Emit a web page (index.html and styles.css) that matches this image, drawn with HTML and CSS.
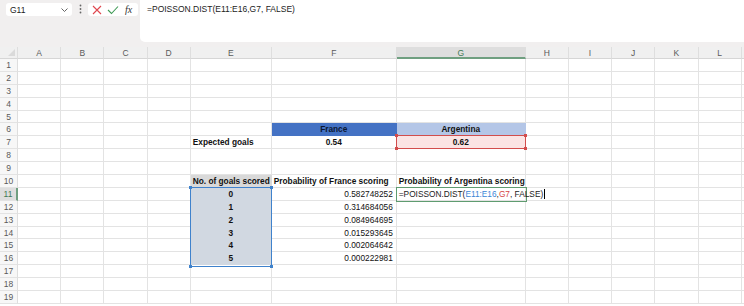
FILE: index.html
```html
<!DOCTYPE html>
<html lang="en">
<head>
    <meta charset="UTF-8" />
    <title>Poisson - expected goals</title>
    <link rel="stylesheet" href="styles.css">
</head>
<body>
    <div class="topbar">
        <div class="namebox">
            <span>G11</span>
            <svg width="7" height="4" viewBox="0 0 7 4"><path d="M0.5 0.5 L3.5 3.5 L6.5 0.5" fill="none" stroke="#555" stroke-width="0.9"/></svg>
        </div>
        <svg class="more" width="3" height="10" viewBox="0 0 3 10">
            <circle cx="1.5" cy="1.5" r="0.9" fill="#666"/>
            <circle cx="1.5" cy="5" r="0.9" fill="#666"/>
            <circle cx="1.5" cy="8.5" r="0.9" fill="#666"/>
        </svg>
        <div class="fbtns">
            <svg width="10" height="10" viewBox="0 0 10 10"><path d="M1 1 L9 9 M9 1 L1 9" stroke="#e0474f" stroke-width="1.1"/></svg>
            <svg width="12" height="10" viewBox="0 0 12 10"><path d="M1 5 L4.5 8.5 L11 1.5" fill="none" stroke="#3f9a55" stroke-width="1.1"/></svg>
            <span class="fx">fx</span>
        </div>
        <div class="formula">=POISSON.DIST(E11:E16,G7, FALSE)</div>
    </div>

    <div class="sheet">
        <!-- column headers -->
        <div class="ch corner"></div>
        <div class="ch">A</div><div class="ch">B</div><div class="ch">C</div><div class="ch">D</div>
        <div class="ch">E</div><div class="ch">F</div><div class="ch on">G</div><div class="ch">H</div>
        <div class="ch">I</div><div class="ch">J</div><div class="ch">K</div><div class="ch">L</div><div class="ch"></div>

        <div class="rh">1</div><div class="c"></div><div class="c"></div><div class="c"></div><div class="c"></div><div class="c"></div><div class="c"></div><div class="c"></div><div class="c"></div><div class="c"></div><div class="c"></div><div class="c"></div><div class="c"></div><div class="c"></div>
        <div class="rh">2</div><div class="c"></div><div class="c"></div><div class="c"></div><div class="c"></div><div class="c"></div><div class="c"></div><div class="c"></div><div class="c"></div><div class="c"></div><div class="c"></div><div class="c"></div><div class="c"></div><div class="c"></div>
        <div class="rh">3</div><div class="c"></div><div class="c"></div><div class="c"></div><div class="c"></div><div class="c"></div><div class="c"></div><div class="c"></div><div class="c"></div><div class="c"></div><div class="c"></div><div class="c"></div><div class="c"></div><div class="c"></div>
        <div class="rh">4</div><div class="c"></div><div class="c"></div><div class="c"></div><div class="c"></div><div class="c"></div><div class="c"></div><div class="c"></div><div class="c"></div><div class="c"></div><div class="c"></div><div class="c"></div><div class="c"></div><div class="c"></div>
        <div class="rh">5</div><div class="c"></div><div class="c"></div><div class="c"></div><div class="c"></div><div class="c"></div><div class="c"></div><div class="c"></div><div class="c"></div><div class="c"></div><div class="c"></div><div class="c"></div><div class="c"></div><div class="c"></div>

        <div class="rh">6</div><div class="c"></div><div class="c"></div><div class="c"></div><div class="c"></div><div class="c"></div>
        <div class="c b ctr fill-blue">France</div>
        <div class="c b ctr fill-light">Argentina</div>
        <div class="c"></div><div class="c"></div><div class="c"></div><div class="c"></div><div class="c"></div><div class="c"></div>

        <div class="rh">7</div><div class="c"></div><div class="c"></div><div class="c"></div><div class="c"></div>
        <div class="c b">Expected goals</div>
        <div class="c b ctr">0.54</div>
        <div class="c b ctr fill-pink ref">0.62
            <div class="hl red"><i class="h tl"></i><i class="h tr"></i><i class="h bl"></i><i class="h br"></i></div>
        </div>
        <div class="c"></div><div class="c"></div><div class="c"></div><div class="c"></div><div class="c"></div><div class="c"></div>

        <div class="rh">8</div><div class="c"></div><div class="c"></div><div class="c"></div><div class="c"></div><div class="c"></div><div class="c"></div><div class="c"></div><div class="c"></div><div class="c"></div><div class="c"></div><div class="c"></div><div class="c"></div><div class="c"></div>
        <div class="rh">9</div><div class="c"></div><div class="c"></div><div class="c"></div><div class="c"></div><div class="c"></div><div class="c"></div><div class="c"></div><div class="c"></div><div class="c"></div><div class="c"></div><div class="c"></div><div class="c"></div><div class="c"></div>

        <div class="rh">10</div><div class="c"></div><div class="c"></div><div class="c"></div><div class="c"></div>
        <div class="c b fill-grey">No. of goals scored</div>
        <div class="c b">Probability of France scoring</div>
        <div class="c b">Probability of Argentina scoring</div>
        <div class="c"></div><div class="c"></div><div class="c"></div><div class="c"></div><div class="c"></div><div class="c"></div>

        <div class="rh on">11</div><div class="c"></div><div class="c"></div><div class="c"></div><div class="c"></div>
        <div class="c b ctr fill-sel ref">0
            <div class="hl blue tall"><i class="h tl"></i><i class="h tr"></i><i class="h bl"></i><i class="h br"></i></div>
        </div>
        <div class="c r">0.582748252</div>
        <div class="c edit">=POISSON.DIST(<span class="t-blue">E11:E16</span>,<span class="t-red">G7</span>, FALSE)<span class="caret"></span></div>
        <div class="c"></div><div class="c"></div><div class="c"></div><div class="c"></div><div class="c"></div><div class="c"></div>

        <div class="rh">12</div><div class="c"></div><div class="c"></div><div class="c"></div><div class="c"></div>
        <div class="c b ctr fill-sel">1</div><div class="c r">0.314684056</div>
        <div class="c"></div><div class="c"></div><div class="c"></div><div class="c"></div><div class="c"></div><div class="c"></div><div class="c"></div>

        <div class="rh">13</div><div class="c"></div><div class="c"></div><div class="c"></div><div class="c"></div>
        <div class="c b ctr fill-sel">2</div><div class="c r">0.084964695</div>
        <div class="c"></div><div class="c"></div><div class="c"></div><div class="c"></div><div class="c"></div><div class="c"></div><div class="c"></div>

        <div class="rh">14</div><div class="c"></div><div class="c"></div><div class="c"></div><div class="c"></div>
        <div class="c b ctr fill-sel">3</div><div class="c r">0.015293645</div>
        <div class="c"></div><div class="c"></div><div class="c"></div><div class="c"></div><div class="c"></div><div class="c"></div><div class="c"></div>

        <div class="rh">15</div><div class="c"></div><div class="c"></div><div class="c"></div><div class="c"></div>
        <div class="c b ctr fill-sel">4</div><div class="c r">0.002064642</div>
        <div class="c"></div><div class="c"></div><div class="c"></div><div class="c"></div><div class="c"></div><div class="c"></div><div class="c"></div>

        <div class="rh">16</div><div class="c"></div><div class="c"></div><div class="c"></div><div class="c"></div>
        <div class="c b ctr fill-sel">5</div><div class="c r">0.000222981</div>
        <div class="c"></div><div class="c"></div><div class="c"></div><div class="c"></div><div class="c"></div><div class="c"></div><div class="c"></div>

        <div class="rh">17</div><div class="c"></div><div class="c"></div><div class="c"></div><div class="c"></div><div class="c"></div><div class="c"></div><div class="c"></div><div class="c"></div><div class="c"></div><div class="c"></div><div class="c"></div><div class="c"></div><div class="c"></div>
        <div class="rh">18</div><div class="c"></div><div class="c"></div><div class="c"></div><div class="c"></div><div class="c"></div><div class="c"></div><div class="c"></div><div class="c"></div><div class="c"></div><div class="c"></div><div class="c"></div><div class="c"></div><div class="c"></div>
        <div class="rh">19</div><div class="c"></div><div class="c"></div><div class="c"></div><div class="c"></div><div class="c"></div><div class="c"></div><div class="c"></div><div class="c"></div><div class="c"></div><div class="c"></div><div class="c"></div><div class="c"></div><div class="c"></div>
    </div>
</body>
</html>
```

FILE: styles.css
```css
/* excel-ish sheet, zoomed out */
:root {
    --row: 12.9px;
    --grid: #e3e3e3;
}
body {
    margin: 0;
    width: 744px;
    height: 306px;
    overflow: hidden;
    background: #fff;
    color: #111;
    font-family: 'Liberation Sans', Arial, sans-serif;
}

/* formula bar */
.topbar {
    display: flex;
    align-items: flex-start;
    height: 47px;
    background: #f1efef;
}
.namebox {
    margin: 3px 0 0 6px;
    width: 66px;
    height: 13px;
    padding: 0 4px 0 4px;
    box-sizing: border-box;
    background: #fff;
    border-radius: 3px;
    display: flex;
    align-items: center;
    justify-content: space-between;
    font-size: 8.5px;
    color: #222;
}
.more {
    margin: 4px 0 0 7px;
}
.fbtns {
    margin: 3px 0 0 6px;
    width: 50px;
    height: 13px;
    padding-left: 4px;
    box-sizing: border-box;
    background: #fff;
    border-radius: 3px;
    display: flex;
    align-items: center;
    gap: 5px;
}
.fx {
    font-family: 'Liberation Serif', serif;
    font-style: italic;
    font-size: 10px;
    color: #333;
    margin-left: 1px;
}
.formula {
    margin-left: 2px;
    flex: 1;
    height: 42px;
    padding: 3px 7px;
    box-sizing: border-box;
    background: #fff;
    border-radius: 0 0 0 5px;
    font-size: 8.5px;
    line-height: 12px;
    color: #222;
}

/* grid */
.sheet {
    display: grid;
    grid-template-columns: 18px repeat(4, 43.2px) 81px 125px 129px repeat(5, 43.2px) 1fr;
    grid-template-rows: 12px repeat(19, var(--row));
    font-size: 8.3px;
}
.sheet > div {
    box-sizing: border-box;
    border-right: 1px solid var(--grid);
    border-bottom: 1px solid var(--grid);
    white-space: nowrap;
    line-height: 12px;
}
.ch {
    background: #f0f0f0;
    color: #5a5a5a;
    text-align: center;
    font-size: 8.5px;
    line-height: 12px;
    border-right-color: #dedede !important;
    border-bottom-color: #d6d6d6 !important;
}
.ch.corner {
    position: relative;
}
.ch.corner::after {
    content: '';
    position: absolute;
    right: 2px;
    bottom: 2px;
    border-left: 7px solid transparent;
    border-bottom: 7px solid #dadada;
}
.ch.on {
    background: #dedede;
    color: #3e7a55;
    border-bottom: 2px solid #6f9f80 !important;
}
.rh {
    background: #f7f7f7;
    color: #5a5a5a;
    text-align: center;
    font-size: 8.5px;
    border-right-color: #dedede !important;
}
.rh.on {
    background: #dedede;
    color: #3e7a55;
    border-right: 2px solid #6f9f80 !important;
}

.c {
    padding: 0 2px;
    overflow: hidden;
}
.b { font-weight: 700; }
.ctr { text-align: center; }
.r { text-align: right; padding-right: 3px; }

.fill-blue { background: #4472c4; color: #0b1630; border-color: #4472c4 !important; }
.fill-light { background: #b4c6e7; border-color: #b4c6e7 !important; }
.fill-grey { background: #d9d9d9; border-color: #d9d9d9 !important; }
.fill-sel { background: #d1d8e1; border-color: #d1d8e1 !important; }
.fill-pink { background: #fbe4e4; }

/* range highlights from the formula */
.ref {
    position: relative;
    overflow: visible;
}
.hl {
    position: absolute;
    left: -1px;
    top: -1px;
    right: -1px;
    bottom: -1px;
    border: 1px solid;
    pointer-events: none;
    z-index: 2;
}
.hl.tall {
    bottom: auto;
    height: calc(var(--row) * 6 + 1px);
}
.hl.blue { border-color: #3f82cc; }
.hl.red { border-color: #d24d4d; }
.h {
    position: absolute;
    width: 3px;
    height: 3px;
}
.blue .h { background: #3f82cc; }
.red .h { background: #d24d4d; }
.h.tl { left: -2px; top: -2px; }
.h.tr { right: -2px; top: -2px; }
.h.bl { left: -2px; bottom: -2px; }
.h.br { right: -2px; bottom: -2px; }

/* cell being edited */
.edit {
    position: relative;
    overflow: visible;
    z-index: 3;
    padding-left: 2px;
    box-shadow: 0 0 0 1px #5f9c70;
    color: #222;
}
.t-blue { color: #3a86d6; }
.t-red { color: #d64545; }
.caret {
    display: inline-block;
    width: 1px;
    height: 10px;
    margin-left: 1px;
    background: #000;
    vertical-align: -2px;
}
```
